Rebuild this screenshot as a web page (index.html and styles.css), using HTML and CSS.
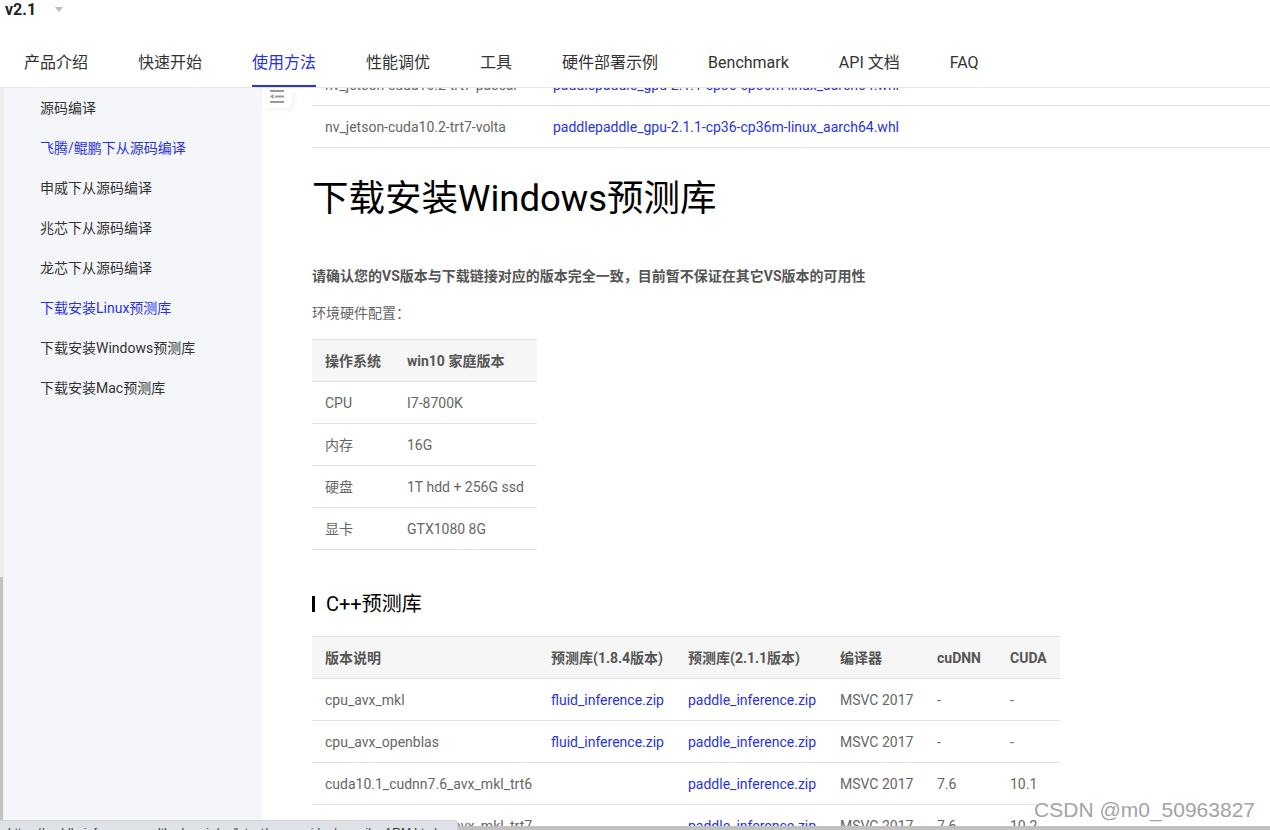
FILE: index.html
```html
<!DOCTYPE html>
<html lang="zh-CN">
<head>
    <meta charset="UTF-8">
    <title>下载安装Windows预测库</title>
    <link rel="stylesheet" href="styles.css">
</head>
<body>
    <div class="topbar">
        <div class="version">v2.1<span class="caret"></span></div>
        <nav class="nav">
            <a class="nav-item">产品介绍</a>
            <a class="nav-item">快速开始</a>
            <a class="nav-item active">使用方法</a>
            <a class="nav-item">性能调优</a>
            <a class="nav-item">工具</a>
            <a class="nav-item">硬件部署示例</a>
            <a class="nav-item">Benchmark</a>
            <a class="nav-item">API 文档</a>
            <a class="nav-item">FAQ</a>
        </nav>
    </div>

    <div class="main">
        <div class="edge"><div class="edge-thumb"></div></div>

        <aside class="sidebar">
            <a class="side-link">源码编译</a>
            <a class="side-link visited">飞腾/鲲鹏下从源码编译</a>
            <a class="side-link">申威下从源码编译</a>
            <a class="side-link">兆芯下从源码编译</a>
            <a class="side-link">龙芯下从源码编译</a>
            <a class="side-link visited">下载安装Linux预测库</a>
            <a class="side-link">下载安装Windows预测库</a>
            <a class="side-link">下载安装Mac预测库</a>
        </aside>

        <div class="content">
            <button class="toggle">
                <svg width="14" height="14" viewBox="0 0 14 14">
                    <path d="M0 1h14M5 6.5h9M0 12h14" stroke="#9a9a9a" stroke-width="2" fill="none"/>
                    <path d="M0 6.5L3.5 4v5z" fill="#9a9a9a"/>
                </svg>
            </button>

            <div class="doc">
                <table class="tbl tbl-wide">
                    <colgroup><col class="w-228"><col></colgroup>
                    <tr><td>nv_jetson-cuda10.2-trt7-pascal</td><td><a>paddlepaddle_gpu-2.1.1-cp36-cp36m-linux_aarch64.whl</a></td></tr>
                    <tr><td>nv_jetson-cuda10.2-trt7-volta</td><td><a>paddlepaddle_gpu-2.1.1-cp36-cp36m-linux_aarch64.whl</a></td></tr>
                </table>

                <h1>下载安装Windows预测库</h1>

                <p class="note">请确认您的VS版本与下载链接对应的版本完全一致，目前暂不保证在其它VS版本的可用性</p>
                <p>环境硬件配置：</p>

                <table class="tbl tbl-env">
                    <colgroup><col class="w-82"><col class="w-143"></colgroup>
                    <tr><th>操作系统</th><th>win10 家庭版本</th></tr>
                    <tr><td>CPU</td><td>I7-8700K</td></tr>
                    <tr><td>内存</td><td>16G</td></tr>
                    <tr><td>硬盘</td><td>1T hdd + 256G ssd</td></tr>
                    <tr><td>显卡</td><td>GTX1080 8G</td></tr>
                </table>

                <h2>C++预测库</h2>

                <table class="tbl tbl-libs">
                    <colgroup>
                        <col class="w-226"><col class="w-137"><col class="w-152">
                        <col class="w-97"><col class="w-73"><col class="w-63">
                    </colgroup>
                    <tr><th>版本说明</th><th>预测库(1.8.4版本)</th><th>预测库(2.1.1版本)</th><th>编译器</th><th>cuDNN</th><th>CUDA</th></tr>
                    <tr><td>cpu_avx_mkl</td><td><a>fluid_inference.zip</a></td><td><a>paddle_inference.zip</a></td><td>MSVC 2017</td><td>-</td><td>-</td></tr>
                    <tr><td>cpu_avx_openblas</td><td><a>fluid_inference.zip</a></td><td><a>paddle_inference.zip</a></td><td>MSVC 2017</td><td>-</td><td>-</td></tr>
                    <tr><td>cuda10.1_cudnn7.6_avx_mkl_trt6</td><td></td><td><a>paddle_inference.zip</a></td><td>MSVC 2017</td><td>7.6</td><td>10.1</td></tr>
                    <tr><td>cuda10.2_cudnn7.6_avx_mkl_trt7</td><td></td><td><a>paddle_inference.zip</a></td><td>MSVC 2017</td><td>7.6</td><td>10.2</td></tr>
                </table>
            </div>
        </div>
    </div>

    <div class="statusbar">https://paddle-inference.readthedocs.io/en/latest/user_guides/compile_ARM.html</div>
    <div class="hscroll"></div>
    <div class="watermark">CSDN @m0_50963827</div>
</body>
</html>
```

FILE: styles.css
```css
* { box-sizing: border-box; }

html, body {
    margin: 0;
    height: 830px;
    overflow: hidden;
}

body {
    position: relative;
    font-family: Roboto, "Noto Sans CJK SC", sans-serif;
    color: #333;
    background: #fff;
}

a { text-decoration: none; cursor: pointer; }

/* header */
.topbar {
    height: 88px;
    border-bottom: 1px solid #e6e6e6;
}

.version {
    height: 20px;
    line-height: 20px;
    padding-left: 5px;
    font-size: 16px;
    font-weight: bold;
    color: #222;
}

.caret {
    display: inline-block;
    vertical-align: middle;
    margin: -3px 0 0 19px;
    border-left: 4px solid transparent;
    border-right: 4px solid transparent;
    border-top: 5px solid #bdbdbd;
}

.nav {
    display: flex;
    gap: 50px;
    padding-left: 24px;
    margin-top: 20px;
}

.nav-item {
    font-size: 16px;
    line-height: 45px;
    color: #333;
    border-bottom: 2px solid transparent;
}

.nav-item.active {
    color: #2932e1;
    border-bottom-color: #2932e1;
}

/* body */
.main {
    display: flex;
    height: 742px;
    overflow: hidden;
}

.edge {
    width: 4px;
    background: #efefef;
    display: flex;
    flex-direction: column;
}

.edge-thumb {
    margin-top: auto;
    height: 253px;
    width: 3px;
    background: #c4c4c4;
}

.sidebar {
    width: 258px;
    flex-shrink: 0;
    background: #f5f6fa;
}

.side-link {
    display: block;
    padding-left: 36px;
    font-size: 14px;
    line-height: 40px;
    color: #333;
}

.side-link.visited { color: #2932e1; }

.content {
    flex: 1;
    min-width: 0;
    position: relative;
}

.toggle {
    position: absolute;
    left: 0;
    top: 0;
    z-index: 1;
    width: 30px;
    height: 20px;
    padding: 0 0 0 8px;
    border: none;
    border-radius: 0 0 6px 0;
    background: #fff;
    box-shadow: 2px 2px 6px rgba(0, 0, 0, 0.06);
}

.toggle svg {
    display: block;
    margin-top: -2px;
}

.doc {
    padding-left: 50px;
    margin-top: -24px;
}

h1 {
    margin: 29px 0 44px;
    font-size: 36.5px;
    line-height: 44px;
    font-weight: normal;
    color: #000;
}

p {
    margin: 0 0 15px;
    font-size: 14px;
    line-height: 22px;
    color: #666;
}

p.note {
    font-weight: bold;
    color: #555;
}

h2 {
    display: flex;
    align-items: center;
    margin: 40px 0 18px;
    font-size: 20px;
    line-height: 28px;
    font-weight: normal;
    color: #000;
}

h2::before {
    content: "";
    width: 3px;
    height: 16px;
    margin-right: 11px;
    background: #000;
}

/* tables */
.tbl {
    border-collapse: separate;
    border-spacing: 0;
    table-layout: fixed;
    font-size: 14px;
    color: #666;
}

.tbl td, .tbl th {
    padding: 2px 13px 0;
    line-height: 39px;
    text-align: left;
    white-space: nowrap;
    overflow: hidden;
    border-bottom: 1px solid #e2e2e2;
}

.tbl th {
    font-weight: bold;
    color: #555;
    background: #f6f6f6;
    border-top: 1px solid #e2e2e2;
}

.tbl a { color: #2932e1; }

.tbl-wide { width: 100%; }
.tbl-env { width: 225px; }
.tbl-libs { width: 748px; }

.w-228 { width: 228px; }
.w-82 { width: 82px; }
.w-143 { width: 143px; }
.w-226 { width: 226px; }
.w-137 { width: 137px; }
.w-152 { width: 152px; }
.w-97 { width: 97px; }
.w-73 { width: 73px; }
.w-63 { width: 63px; }

/* browser overlays */
.statusbar {
    position: absolute;
    left: 0;
    top: 820px;
    width: 458px;
    height: 24px;
    padding: 3px 8px;
    font-family: "Liberation Sans", sans-serif;
    font-size: 12px;
    line-height: 18px;
    color: #333;
    background: #dee1e6;
    border-top: 1px solid #d0d3d8;
    border-right: 1px solid #d0d3d8;
    border-top-right-radius: 4px;
    white-space: nowrap;
    overflow: hidden;
}

.hscroll {
    position: absolute;
    left: 458px;
    right: 0;
    top: 826px;
    height: 4px;
    background: #c1c1c1;
}

.watermark {
    position: absolute;
    right: 15px;
    top: 797px;
    font-family: "Liberation Sans", sans-serif;
    font-size: 21px;
    line-height: 26px;
    color: #a3a3a3;
    text-shadow: 0 0 2px #fff, 0 0 2px #fff;
}
```
